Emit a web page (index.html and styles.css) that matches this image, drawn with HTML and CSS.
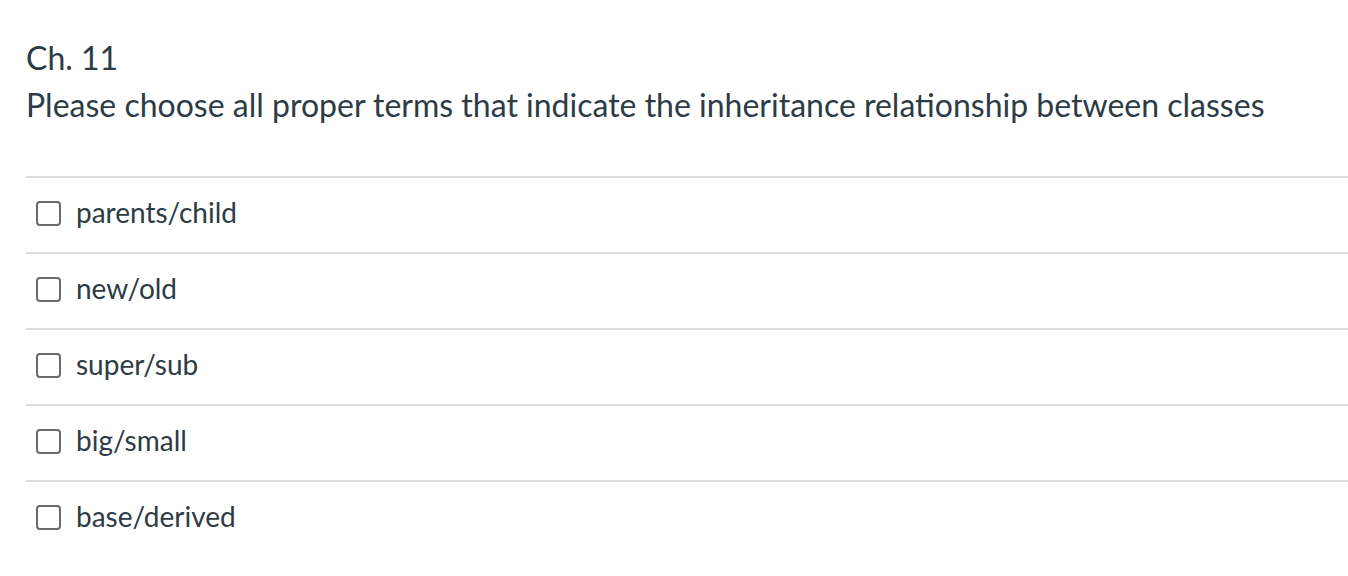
FILE: index.html
```html
<!DOCTYPE html>
<html>
<head>
<meta charset="utf-8">
<link rel="stylesheet" href="styles.css">
</head>
<body>
<div class="quiz">
  <div class="header">
    <div class="title">Ch. 11</div>
    <div class="question">Please choose all proper terms that indicate the inheritance relationship between classes</div>
  </div>
  <div class="answers">
    <label class="answer"><span class="box"></span><span class="label">parents/child</span></label>
    <label class="answer"><span class="box"></span><span class="label">new/old</span></label>
    <label class="answer"><span class="box"></span><span class="label">super/sub</span></label>
    <label class="answer"><span class="box"></span><span class="label">big/small</span></label>
    <label class="answer"><span class="box"></span><span class="label">base/derived</span></label>
  </div>
</div>
</body>
</html>
```
FILE: styles.css
```css
html, body {
  margin: 0;
  padding: 0;
  background: #fff;
}
body {
  font-family: Lato, "Liberation Sans", sans-serif;
  color: #2d3b45;
}
.quiz {
  padding-left: 26px;
}
.header {
  padding-top: 37px;
  padding-bottom: 44px;
}
.title {
  font-size: 32px;
  line-height: 41px;
}
.question {
  font-size: 32px;
  line-height: 54px;
}
.answers {
  display: flex;
  flex-direction: column;
}
.answer {
  box-sizing: border-box;
  display: flex;
  align-items: center;
  gap: 15px;
  height: 76px;
  padding-left: 10px;
  padding-bottom: 3px;
  border-top: 2px solid #dddddd;
}
.box {
  width: 21px;
  height: 21px;
  border: 2px solid #6b6b6b;
  border-radius: 4px;
  flex: none;
}
.label {
  font-size: 28px;
  padding-bottom: 3px;
}
```
